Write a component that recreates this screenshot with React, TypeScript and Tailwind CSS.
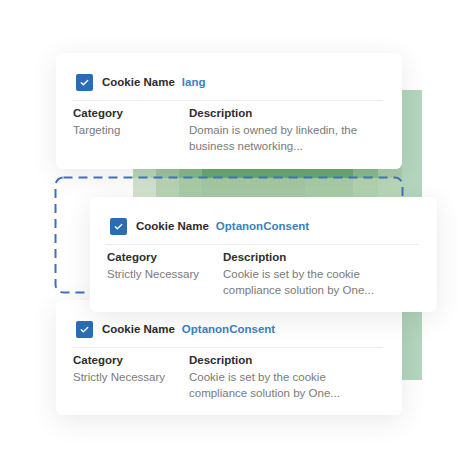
import React from 'react';

type Cookie = {
  name: string;
  category: string;
  description: string[];
};

const cookies: Record<string, Cookie> = {
  lang: {
    name: 'lang',
    category: 'Targeting',
    description: ['Domain is owned by linkedin, the', 'business networking...'],
  },
  consent: {
    name: 'OptanonConsent',
    category: 'Strictly Necessary',
    description: ['Cookie is set by the cookie', 'compliance solution by One...'],
  },
};

// dark row and light row of the green mosaic, left to right
const tiles = [
  { w: 23, dark: '#b9d5b6', light: '#d4e4d1' },
  { w: 23, dark: '#9dc59d', light: '#bad6b6' },
  { w: 23, dark: '#87ba8b', light: '#abcfa9' },
  { w: 103, dark: '#6ba970', light: '#a6cba4' },
  { w: 48, dark: '#6daa72', light: '#aacea9' },
  { w: 25, dark: '#89bc8d', light: '#b3d4b1' },
  { w: 24, dark: '#a9cca9', light: '#bbd8bb' },
];

function Mosaic() {
  let x = 0;
  return (
    <svg width={289} height={290} viewBox="0 0 289 290">
      <rect x={0} y={0} width={289} height={290} fill="#b4d6bd" />
      {tiles.map((t, i) => {
        const left = x;
        x += t.w;
        return (
          <g key={i}>
            <rect x={left} y={66} width={t.w} height={22} fill={t.dark} />
            <rect x={left} y={88} width={t.w} height={22} fill={t.light} />
          </g>
        );
      })}
    </svg>
  );
}

function Checkbox() {
  return (
    <div className="flex h-[17px] w-[17px] items-center justify-center rounded-[2px] bg-[#2b6db3]">
      <svg width="11" height="11" viewBox="0 0 24 24" fill="none" stroke="white" strokeWidth={3} strokeLinecap="round" strokeLinejoin="round">
        <path d="M5 12.5l4.5 4.5L19 7.5" />
      </svg>
    </div>
  );
}

function CookieCard({ cookie, className = '' }: { cookie: Cookie; className?: string }) {
  return (
    <div className={`h-[116px] rounded-md bg-white px-4 pt-[21px] shadow-[0_6px_28px_rgba(0,0,0,0.09)] ${className}`}>
      <div className="flex items-center gap-[9px] pl-1">
        <Checkbox />
        <span className="text-[11.5px] font-bold text-[#2b2b2b]">Cookie Name</span>
        <span className="-ml-0.5 text-[11.5px] font-semibold text-[#3a7fbf]">{cookie.name}</span>
      </div>
      <div className="mr-[3px] mt-[9px] h-px bg-[#ececec]" />
      <div className="mt-[4px] flex text-[11.5px] leading-[16px]">
        <div className="w-[117px] pl-px">
          <div className="mb-px font-bold text-[#2e2e2e]">Category</div>
          <div className="text-[#7a7a7a]">{cookie.category}</div>
        </div>
        <div>
          <div className="mb-px font-bold text-[#2e2e2e]">Description</div>
          {cookie.description.map(line => (
            <div key={line} className="text-[#7a7a7a]">{line}</div>
          ))}
        </div>
      </div>
    </div>
  );
}

export default function App() {
  return (
    <div
      className="relative h-[474px] w-[474px] overflow-hidden bg-white pl-[56px] pt-[53px]"
      style={{ fontFamily: '"Liberation Sans", Arial, sans-serif' }}
    >
      {/* green mosaic behind the cards */}
      <div className="absolute left-[133px] top-[90px]">
        <Mosaic />
      </div>

      <div className="relative flex w-[346px] flex-col gap-[131px]">
        <CookieCard cookie={cookies.lang} />
        <CookieCard cookie={cookies.consent} className="!h-[115px]" />
      </div>

      {/* dashed selection outline */}
      <div className="absolute left-[54px] top-[176px]">
        <svg width={350} height={118} viewBox="0 0 350 118">
          <rect x={1.5} y={1.5} width={347} height={115} rx={8} fill="none" stroke="#3f70c0" strokeWidth={2} strokeDasharray="9 6" />
        </svg>
      </div>

      {/* card being dragged */}
      <div className="absolute left-[90px] top-[197px] w-[347px]">
        <CookieCard cookie={cookies.consent} className="!h-[115px]" />
      </div>
    </div>
  );
}
